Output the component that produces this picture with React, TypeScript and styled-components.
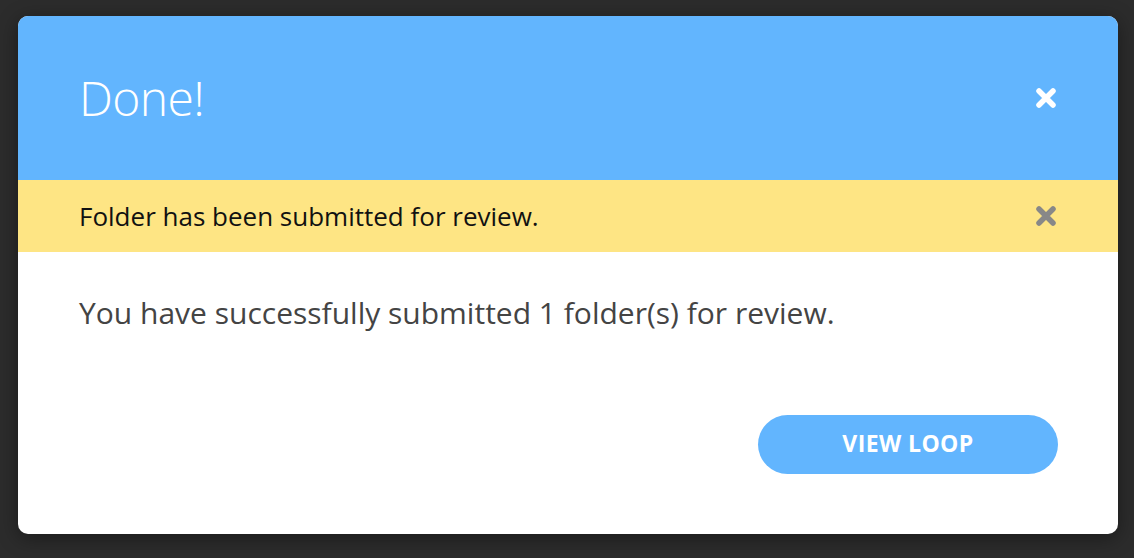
import React from "react";
import styled, { createGlobalStyle } from "styled-components";

const Global = createGlobalStyle`
  html, body { margin: 0; padding: 0; background: #2c2c2c; }
  body { font-family: "Open Sans", "Liberation Sans", sans-serif; }
  * { box-sizing: border-box; }
`;

const Page = styled.div`
  width: 1134px;
  height: 558px;
  padding: 16px 16px 24px 18px;
  background: #2c2c2c;
`;

const Modal = styled.div`
  width: 1100px;
  height: 518px;
  background: #fff;
  border-radius: 10px;
  overflow: hidden;
  display: flex;
  flex-direction: column;
  box-shadow: 0 4px 20px rgba(0, 0, 0, 0.4);
`;

const Header = styled.div`
  height: 164px;
  background: #62b5fe;
  display: flex;
  align-items: center;
  justify-content: space-between;
  padding: 0 60px 0 61px;
`;

const Title = styled.h1`
  margin: 0;
  font-weight: 300;
  font-size: 48px;
  color: #fff;
  letter-spacing: -0.6px;
  transform: translateY(-1px);
`;

const Banner = styled.div`
  height: 72px;
  background: #fee584;
  display: flex;
  align-items: center;
  justify-content: space-between;
  padding: 0 60px 0 61px;
  font-size: 26px;
  color: #111;
`;

const CloseButton = styled.button<{ $color: string }>`
  border: 0;
  background: none;
  padding: 0;
  width: 24px;
  height: 24px;
  display: flex;
  align-items: center;
  justify-content: center;
  color: ${(p) => p.$color};
  cursor: pointer;
`;

const Body = styled.div`
  flex: 1;
  display: flex;
  flex-direction: column;
  padding: 40px 60px 60px 61px;
`;

const Message = styled.p`
  margin: 0;
  font-size: 30px;
  color: #444;
`;

const Actions = styled.div`
  margin-top: auto;
  display: flex;
  justify-content: flex-end;
`;

const PrimaryButton = styled.button`
  width: 300px;
  height: 59px;
  border: 0;
  border-radius: 30px;
  background: #62b5fe;
  color: #fff;
  font-family: "Open Sans", "Liberation Sans", sans-serif;
  font-weight: 700;
  font-size: 23px;
  letter-spacing: 0.4px;
  padding: 0 0 3px;
  cursor: pointer;
`;

const XIcon = () => (
  <svg width="24" height="24" viewBox="0 0 24 24">
    <path
      d="M5 5 L19 19 M19 5 L5 19"
      stroke="currentColor"
      strokeWidth="5.5"
      strokeLinecap="round"
    />
  </svg>
);

export default function App() {
  return (
    <>
      <Global />
      <Page>
        <Modal>
          <Header>
            <Title>Done!</Title>
            <CloseButton $color="#fff" aria-label="Close">
              <XIcon />
            </CloseButton>
          </Header>
          <Banner>
            <span>Folder has been submitted for review.</span>
            <CloseButton $color="#888" aria-label="Dismiss">
              <XIcon />
            </CloseButton>
          </Banner>
          <Body>
            <Message>You have successfully submitted 1 folder(s) for review.</Message>
            <Actions>
              <PrimaryButton>VIEW LOOP</PrimaryButton>
            </Actions>
          </Body>
        </Modal>
      </Page>
    </>
  );
}
